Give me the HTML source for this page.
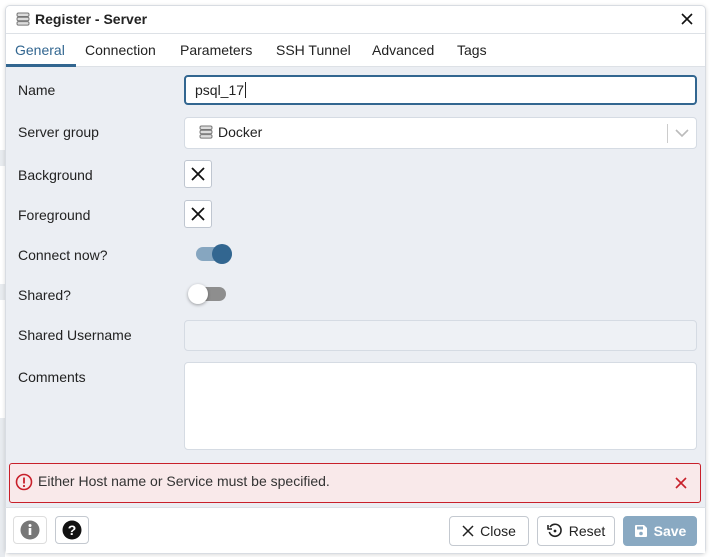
<!DOCTYPE html>
<html><head><style>
*{box-sizing:border-box;margin:0;padding:0}
body{width:710px;height:557px;background:#fff;font-family:"Liberation Sans",sans-serif;position:relative;overflow:hidden;color:#222}
.a{position:absolute}
.dlg{left:5px;top:5px;width:701px;height:549px;border:1px solid #d8dce2;border-radius:5px;background:#ebeef3;overflow:hidden;box-shadow:0 1px 4px rgba(0,0,0,.15)}
.lbl{left:18px;font-size:14px;color:#222}
.inp{left:184px;width:513px;border:1px solid #d5dbe3;border-radius:4px;background:#fff}
.btn{border:1px solid #c4c9d0;border-radius:4px;background:#fff;font-size:14px;display:flex;align-items:center;justify-content:center;gap:6px;color:#222}
</style></head><body>
<div class="a" style="left:0;top:0;width:5px;height:557px;background:#fff"></div>
<div class="a" style="left:0;top:150px;width:5px;height:16px;background:#e8ebef"></div>
<div class="a" style="left:0;top:284px;width:5px;height:16px;background:#e8ebef"></div>
<div class="a" style="left:0;top:418px;width:5px;height:139px;background:#e8ebef"></div>
<div class="a dlg">
 <div class="a" style="left:0;top:0;width:701px;height:61px;background:#fff"></div>
 <div class="a" style="left:0;top:27px;width:701px;height:1px;background:#dde1e6"></div>
 <div class="a" style="left:0;top:60px;width:701px;height:1px;background:#dde1e6"></div>
 <svg class="a" style="left:10px;top:6px" width="14" height="14" viewBox="0 0 14 14"><g fill="#ddd" stroke="#777" stroke-width="1"><rect x="1" y="1" width="12" height="3.5" rx="1.5"/><rect x="1" y="5.3" width="12" height="3.5" rx="1.5"/><rect x="1" y="9.6" width="12" height="3.5" rx="1.5"/></g></svg>
 <div class="a" style="left:29px;top:5px;font-size:14px;font-weight:bold;color:#222">Register - Server</div>
 <svg class="a" style="left:675px;top:7px" width="12" height="12" viewBox="0 0 12 12"><path d="M1 1L11 11M11 1L1 11" stroke="#111" stroke-width="1.6"/></svg>
 <div class="a" style="top:36px;left:9px;font-size:14px;color:#326690">General</div>
 <div class="a" style="top:36px;left:79px;font-size:14px">Connection</div>
 <div class="a" style="top:36px;left:174px;font-size:14px">Parameters</div>
 <div class="a" style="top:36px;left:270px;font-size:14px">SSH Tunnel</div>
 <div class="a" style="top:36px;left:366px;font-size:14px">Advanced</div>
 <div class="a" style="top:36px;left:451px;font-size:14px">Tags</div>
 <div class="a" style="left:0;top:58px;width:70px;height:3px;background:#326690"></div>
</div>
<div class="a lbl" style="top:82px">Name</div>
<div class="a inp" style="top:75px;height:30px;border:2px solid #326690;font-size:14px;padding:5px 9px">psql_17<span style="border-left:1px solid #222;margin-left:1px"></span></div>
<div class="a lbl" style="top:124px">Server group</div>
<div class="a inp" style="top:117px;height:32px"></div>
<svg class="a" style="left:199px;top:125px" width="14" height="14" viewBox="0 0 14 14"><g fill="#ddd" stroke="#777" stroke-width="1"><rect x="1" y="1" width="12" height="3.5" rx="1.5"/><rect x="1" y="5.3" width="12" height="3.5" rx="1.5"/><rect x="1" y="9.6" width="12" height="3.5" rx="1.5"/></g></svg>
<div class="a" style="left:218px;top:124px;font-size:14px">Docker</div>
<div class="a" style="left:667px;top:124px;width:1px;height:19px;background:#ccc"></div>
<svg class="a" style="left:675px;top:129px" width="14" height="9" viewBox="0 0 14 9"><path d="M1 1L7 7L13 1" stroke="#bbb" stroke-width="1.6" fill="none"/></svg>
<div class="a lbl" style="top:167px">Background</div>
<div class="a" style="left:184px;top:160px;width:28px;height:28px;border:1px solid #bfc6d0;border-radius:3px;background:#fff"></div>
<svg class="a" style="left:191px;top:167px" width="14" height="14"><path d="M1 1L13 13M13 1L1 13" stroke="#111" stroke-width="1.8"/></svg>
<div class="a lbl" style="top:207px">Foreground</div>
<div class="a" style="left:184px;top:200px;width:28px;height:28px;border:1px solid #bfc6d0;border-radius:3px;background:#fff"></div>
<svg class="a" style="left:191px;top:207px" width="14" height="14"><path d="M1 1L13 13M13 1L1 13" stroke="#111" stroke-width="1.8"/></svg>
<div class="a lbl" style="top:247px">Connect now?</div>
<div class="a" style="left:196px;top:247px;width:36px;height:14px;border-radius:7px;background:#86a6c0"></div>
<div class="a" style="left:212px;top:244px;width:20px;height:20px;border-radius:50%;background:#326690"></div>
<div class="a lbl" style="top:287px">Shared?</div>
<div class="a" style="left:190px;top:287px;width:36px;height:14px;border-radius:7px;background:#8e8e8e"></div>
<div class="a" style="left:188px;top:284px;width:20px;height:20px;border-radius:50%;background:#fff;box-shadow:0 1px 3px rgba(0,0,0,.35)"></div>
<div class="a lbl" style="top:327px">Shared Username</div>
<div class="a inp" style="top:320px;height:31px;background:#eef1f5"></div>
<div class="a lbl" style="top:369px">Comments</div>
<div class="a inp" style="top:362px;height:88px"></div>
<div class="a" style="left:9px;top:463px;width:692px;height:40px;border:1px solid #c8202a;border-radius:3px;background:#f9e9ea"></div>
<svg class="a" style="left:15px;top:473px" width="18" height="18" viewBox="0 0 18 18"><circle cx="9" cy="9" r="7.5" fill="none" stroke="#c8202a" stroke-width="1.6"/><path d="M9 4.5V10.5" stroke="#c8202a" stroke-width="1.8"/><circle cx="9" cy="13" r="1.1" fill="#c8202a"/></svg>
<div class="a" style="left:38px;top:473px;font-size:14px;color:#333">Either Host name or Service must be specified.</div>
<svg class="a" style="left:675px;top:477px" width="12" height="12"><path d="M1 1L11 11M11 1L1 11" stroke="#c8202a" stroke-width="1.6"/></svg>
<div class="a" style="left:5px;top:507px;width:701px;height:1px;background:#dde1e6"></div>
<div class="a" style="left:6px;top:508px;width:699px;height:45px;background:#fff"></div>
<div class="a btn" style="left:13px;top:516px;width:34px;height:28px;border-color:#ddd"><svg width="20" height="20"><circle cx="10" cy="10" r="9.5" fill="#777"/><rect x="8.7" y="8" width="2.6" height="7" fill="#fff"/><circle cx="10" cy="5.5" r="1.5" fill="#fff"/></svg></div>
<div class="a btn" style="left:55px;top:516px;width:34px;height:28px"><svg width="20" height="20"><circle cx="10" cy="10" r="9.5" fill="#111"/><text x="10" y="15" text-anchor="middle" font-size="14" font-weight="bold" fill="#fff" font-family="Liberation Sans">?</text></svg></div>
<div class="a btn" style="left:449px;top:516px;width:80px;height:30px"><svg width="12" height="12"><path d="M1 1L11 11M11 1L1 11" stroke="#222" stroke-width="1.5"/></svg>Close</div>
<div class="a btn" style="left:537px;top:516px;width:78px;height:30px"><svg width="16" height="16" viewBox="0 0 16 16"><path d="M3 4A6 6 0 1 1 2.3 9" fill="none" stroke="#222" stroke-width="1.6"/><path d="M1 2V6H5" fill="none" stroke="#222" stroke-width="1.6"/><circle cx="8" cy="8" r="1.4" fill="#222"/></svg>Reset</div>
<div class="a btn" style="left:623px;top:516px;width:74px;height:30px;background:#89a9c2;border-color:#89a9c2;color:#fff;font-weight:bold"><svg width="14" height="14" viewBox="0 0 14 14"><path d="M1 2a1 1 0 0 1 1-1h8l3 3v8a1 1 0 0 1-1 1H2a1 1 0 0 1-1-1z" fill="#fff"/><rect x="3" y="2.5" width="6" height="3" fill="#89a9c2"/><circle cx="7" cy="9.5" r="1.8" fill="#89a9c2"/></svg>Save</div>
</body></html>
